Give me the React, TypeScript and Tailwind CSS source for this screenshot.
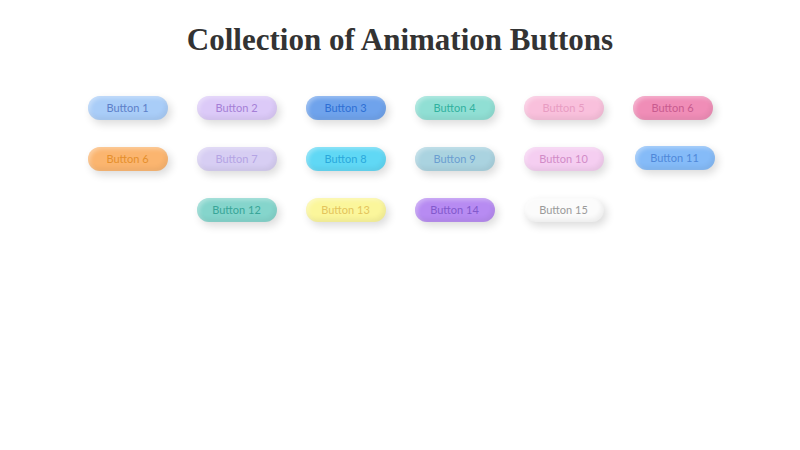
import React from 'react';

interface AnimButton {
  label: string;
  className: string;
}

// pastel pills, each with a darker tone of its own colour for the label
const buttons: AnimButton[] = [
  { label: 'Button 1', className: 'bg-[#a9cdf8] text-[#5d80c9]' },
  { label: 'Button 2', className: 'bg-[#dccaf8] text-[#a57fd6]' },
  { label: 'Button 3', className: 'bg-[#6fa3ec] text-[#2e6fd4]' },
  { label: 'Button 4', className: 'bg-[#90dfd4] text-[#30b19f]' },
  { label: 'Button 5', className: 'bg-[#f9c0dc] text-[#e89cc2]' },
  { label: 'Button 6', className: 'bg-[#f08db7] text-[#c85b8f]' },
  { label: 'Button 6', className: 'bg-[#fbb56f] text-[#e58f2c]' },
  { label: 'Button 7', className: 'bg-[#d7cef3] text-[#b4a4e4]' },
  { label: 'Button 8', className: 'bg-[#60d8f5] text-[#2aa8dc]' },
  { label: 'Button 9', className: 'bg-[#aad3e0] text-[#6b9ed0]' },
  { label: 'Button 10', className: 'bg-[#f5cef1] text-[#d18bc7]' },
  { label: 'Button 11', className: 'bg-[#85bbf8] text-[#4f88d9] translate-x-[2px] -translate-y-[1px] shadow-[2px_3px_6px_rgba(0,0,0,0.08)]' },
  { label: 'Button 12', className: 'bg-[#85d5cc] text-[#38a598]' },
  { label: 'Button 13', className: 'bg-[#fbf69b] text-[#e4c45c]' },
  { label: 'Button 14', className: 'bg-[#b78bf2] text-[#8259cc]' },
  { label: 'Button 15', className: 'bg-[#fbfbfb] text-[#9a9a9a]' },
];

export default function App() {
  return (
    <div className="min-h-[450px] w-full bg-white">
      <h1 className="pt-[21px] text-center font-['Liberation_Serif',serif] text-[31px] font-bold leading-[38px] text-[#333333]">
        Collection of Animation Buttons
      </h1>
      <div className="mx-auto mt-[37px] flex w-[640px] flex-wrap justify-center gap-x-[29px] gap-y-[27px]">
        {buttons.map((b, i) => (
          <button
            key={i}
            className={`h-6 w-20 rounded-full font-['Lato',sans-serif] text-[11px] leading-6 shadow-[3px_4px_8px_rgba(0,0,0,0.14),inset_-2px_-3px_5px_rgba(0,0,0,0.06),inset_2px_2px_4px_rgba(255,255,255,0.35)] ${b.className}`}
          >
            {b.label}
          </button>
        ))}
      </div>
    </div>
  );
}
